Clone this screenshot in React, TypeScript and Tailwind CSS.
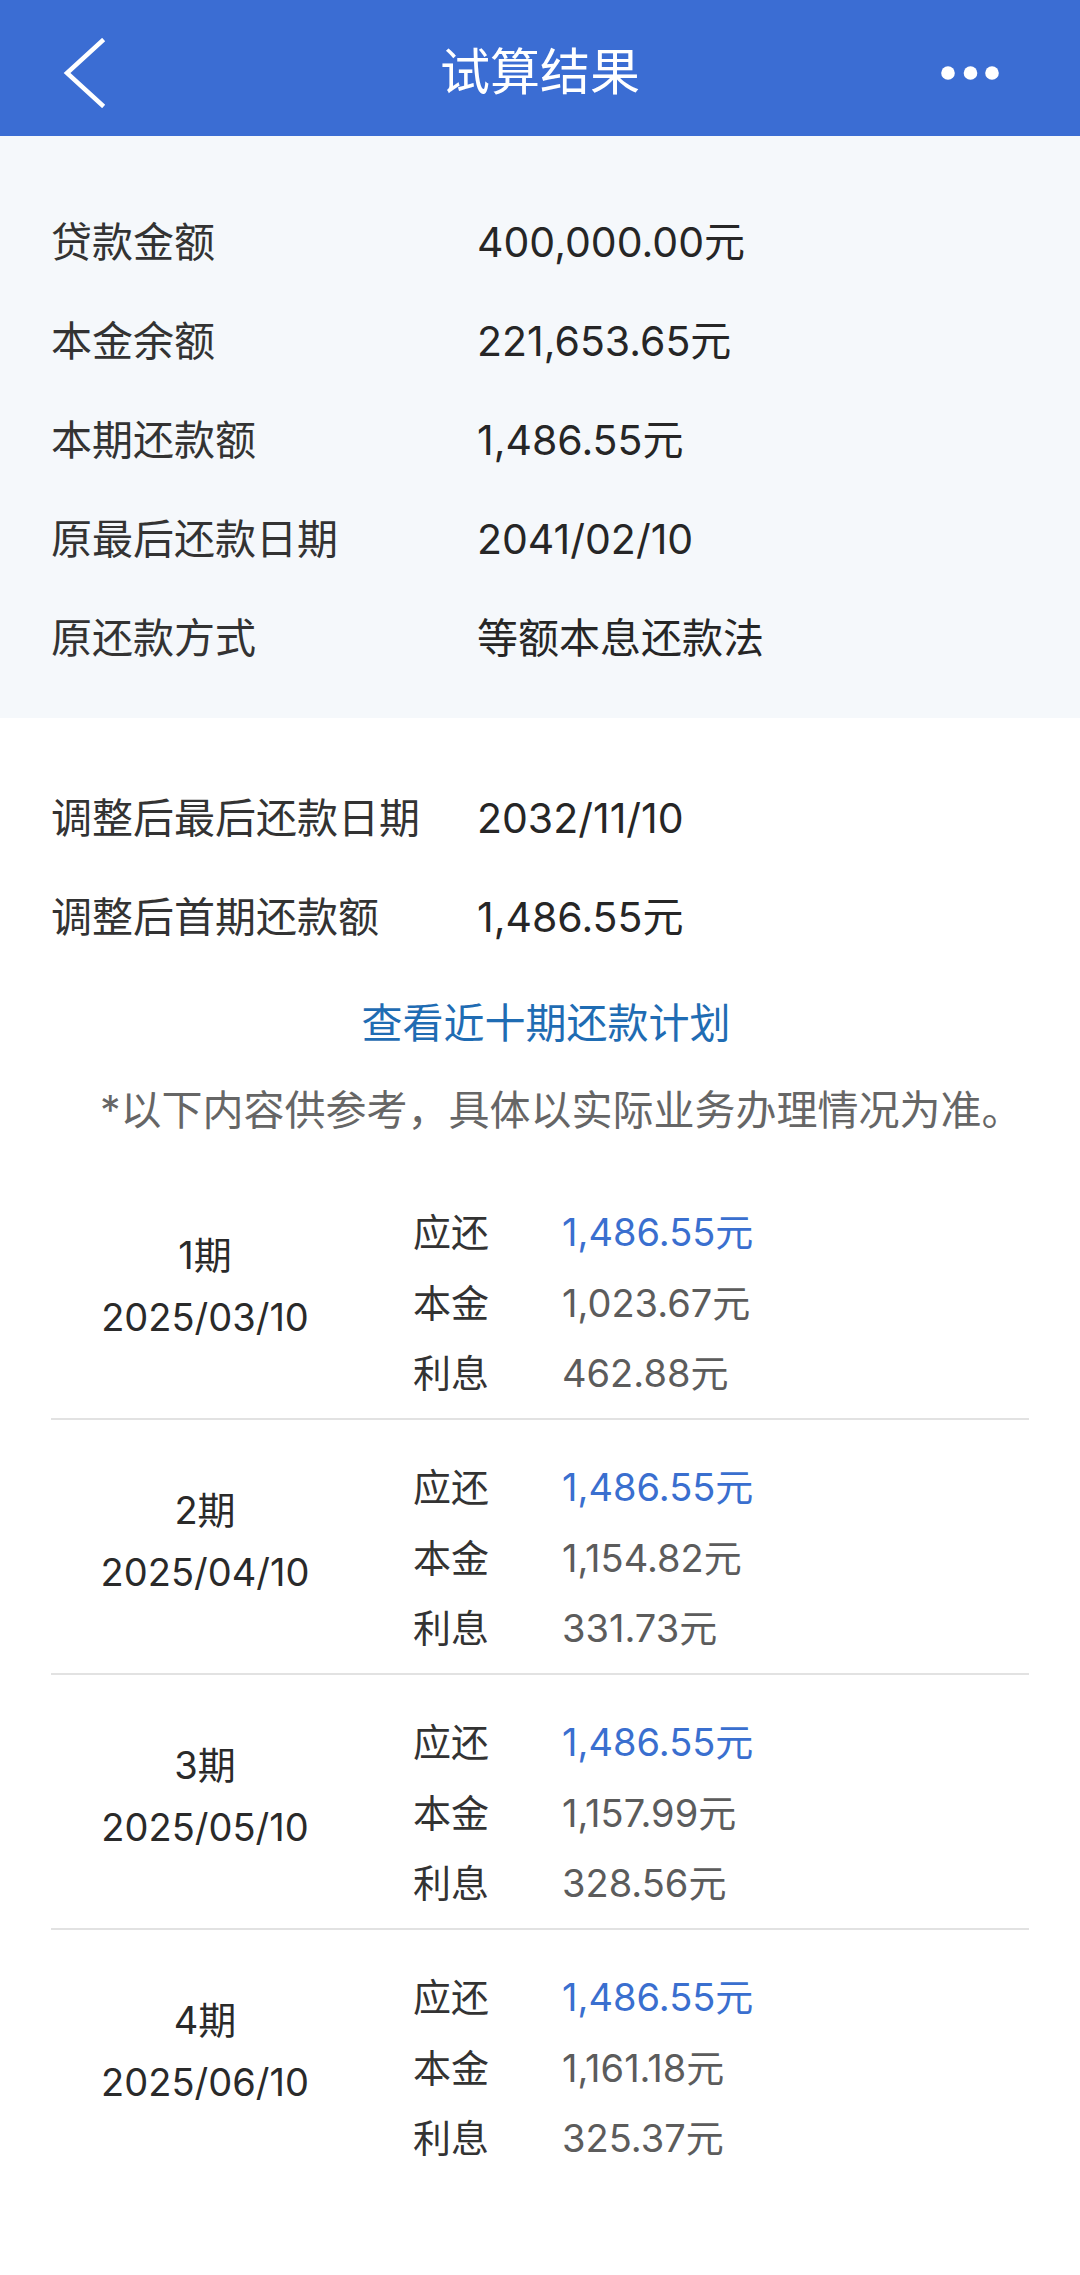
import React from "react";

const font = { fontFamily: 'Inter, "Noto Sans CJK SC", sans-serif' };

const topRows = [
  ["贷款金额", "400,000.00元"],
  ["本金余额", "221,653.65元"],
  ["本期还款额", "1,486.55元"],
  ["原最后还款日期", "2041/02/10"],
  ["原还款方式", "等额本息还款法"],
];

const adjRows = [
  ["调整后最后还款日期", "2032/11/10"],
  ["调整后首期还款额", "1,486.55元"],
];

const periods = [
  { n: "1期", d: "2025/03/10", due: "1,486.55元", p: "1,023.67元", i: "462.88元" },
  { n: "2期", d: "2025/04/10", due: "1,486.55元", p: "1,154.82元", i: "331.73元" },
  { n: "3期", d: "2025/05/10", due: "1,486.55元", p: "1,157.99元", i: "328.56元" },
  { n: "4期", d: "2025/06/10", due: "1,486.55元", p: "1,161.18元", i: "325.37元" },
];

function Row({ label, value }: { label: string; value: string }) {
  return (
    <div className="flex h-[99px] items-center px-[51px] text-[41px] leading-none">
      <div className="w-[426px] shrink-0 text-[#333333]">{label}</div>
      <div className="text-[#262626]">{value}</div>
    </div>
  );
}

export default function App() {
  return (
    <div className="min-h-[2275px] w-[1080px] bg-white" style={font}>
      {/* Header */}
      <div className="relative flex h-[136px] items-center justify-center bg-[#3b6dd3]">
        <svg
          className="absolute left-[62px] top-[38px]"
          width="44"
          height="70"
          viewBox="0 0 44 70"
          fill="none"
        >
          <path d="M40 3 L5 35 L40 67" stroke="white" strokeWidth="4.5" strokeLinecap="square" strokeLinejoin="miter" />
        </svg>
        <div
          className="text-[50px] font-normal leading-none text-white"
          style={{ fontFamily: '"Noto Sans CJK SC", sans-serif' }}
        >
          试算结果
        </div>
        <svg className="absolute left-[938px] top-[63px]" width="64" height="20" viewBox="0 0 64 20">
          <circle cx="10" cy="10" r="6.8" fill="white" />
          <circle cx="32.5" cy="10" r="6.8" fill="white" />
          <circle cx="54" cy="10" r="6.8" fill="white" />
        </svg>
      </div>

      {/* Original loan info */}
      <div className="h-[582px] bg-[#f5f8fb] pt-[57px]">
        {topRows.map(([l, v]) => (
          <Row key={l} label={l} value={v} />
        ))}
      </div>

      {/* Adjusted */}
      <div className="pt-[51px]">
        {adjRows.map(([l, v]) => (
          <Row key={l} label={l} value={v} />
        ))}
      </div>

      <div className="mt-[26px] flex h-[60px] items-center justify-center pl-[12px] text-[41px] leading-none text-[#1f6cb3]">
        查看近十期还款计划
      </div>
      <div className="mt-[27px] flex h-[60px] items-center pl-[100px] text-[41px] leading-none text-[#666666]">
        *以下内容供参考，具体以实际业务办理情况为准。
      </div>

      {/* Periods */}
      <div className="mt-[25px] px-[51px]">
        {periods.map((p, idx) => (
          <div
            key={p.n}
            className={
              idx < periods.length - 1
                ? "flex h-[255px] border-b-2 border-[#e2e2e2]"
                : "flex h-[255px]"
            }
          >
            <div className="w-[308px] shrink-0 pt-[59px] text-center text-[38px] leading-[62px] text-[#2a2a2a]">
              <div>{p.n}</div>
              <div>{p.d}</div>
            </div>
            <div className="pl-[54px] pt-[32px] text-[38px] leading-none">
              <div className="flex h-[70px] items-center">
                <div className="w-[149px] text-[#333333]">应还</div>
                <div className="text-[#3a6fcf]">{p.due}</div>
              </div>
              <div className="flex h-[71px] items-center">
                <div className="w-[149px] text-[#333333]">本金</div>
                <div className="text-[#5c5c5c]">{p.p}</div>
              </div>
              <div className="flex h-[70px] items-center">
                <div className="w-[149px] text-[#333333]">利息</div>
                <div className="text-[#5c5c5c]">{p.i}</div>
              </div>
            </div>
          </div>
        ))}
      </div>
    </div>
  );
}
